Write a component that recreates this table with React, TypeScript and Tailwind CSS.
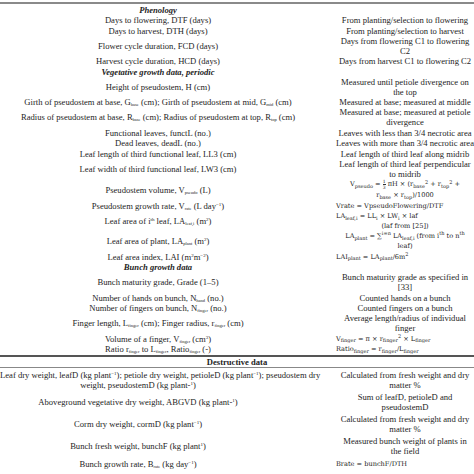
import type { ReactNode } from 'react'

type Row =
  | { kind: 'head'; text: string }
  | { kind: 'wide'; text: string }
  | { kind: 'row'; left: ReactNode; right: ReactNode; rightMath?: boolean; destructive?: boolean; last?: boolean }

const S = ({ children }: { children: ReactNode }) => (
  <sub className="text-[4.5px] align-baseline relative top-[1px]">{children}</sub>
)
const U = ({ children }: { children: ReactNode }) => (
  <sup className="text-[5px] align-baseline relative -top-[3px]">{children}</sup>
)
const MS = ({ children }: { children: ReactNode }) => (
  <sub className="text-[5px] align-baseline relative top-[1.5px]">{children}</sub>
)
const MU = ({ children }: { children: ReactNode }) => (
  <sup className="text-[5px] align-baseline relative -top-[3px]">{children}</sup>
)

const rows: Row[] = [
  { kind: 'head', text: 'Phenology' },
  { kind: 'row', left: 'Days to flowering, DTF (days)', right: 'From planting/selection to flowering' },
  { kind: 'row', left: 'Days to harvest, DTH (days)', right: 'From planting/selection to harvest' },
  { kind: 'row', left: 'Flower cycle duration, FCD (days)', right: <>Days from flowering C1 to flowering<br />C2</> },
  { kind: 'row', left: 'Harvest cycle duration, HCD (days)', right: 'Days from harvest C1 to flowering C2' },
  { kind: 'head', text: 'Vegetative growth data, periodic' },
  { kind: 'row', left: 'Height of pseudostem, H (cm)', right: <>Measured until petiole divergence on<br />the top</> },
  {
    kind: 'row',
    left: <>Girth of pseudostem at base, G<S>base</S> (cm); Girth of pseudostem at mid, G<S>mid</S> (cm)</>,
    right: 'Measured at base; measured at middle',
  },
  {
    kind: 'row',
    left: <>Radius of pseudostem at base, R<S>base</S> (cm); Radius of pseudostem at top, R<S>top</S> (cm)</>,
    right: <>Measured at base; measured at petiole<br />divergence</>,
  },
  { kind: 'row', left: 'Functional leaves, functL (no.)', right: 'Leaves with less than 3/4 necrotic area' },
  { kind: 'row', left: 'Dead leaves, deadL (no.)', right: 'Leaves with more than 3/4 necrotic area' },
  { kind: 'row', left: 'Leaf length of third functional leaf, LL3 (cm)', right: 'Leaf length of third leaf along midrib' },
  { kind: 'row', left: 'Leaf width of third functional leaf, LW3 (cm)', right: <>Leaf length of third leaf perpendicular<br />to midrib</> },
  {
    kind: 'row',
    left: <>Pseudostem volume, V<S>pseudo</S> (L)</>,
    rightMath: true,
    right: (
      <div className="text-center">
        <div>
          V<MS>pseudo</MS> = <span className="inline-flex flex-col align-middle text-[4.5px] leading-[5px]"><span>1</span><span className="border-t border-[#333]">3</span></span> πH × (r<MS>base</MS><MU>2</MU> + r<MS>top</MS><MU>2</MU> +
        </div>
        <div>r<MS>base</MS> × r<MS>top</MS>)/1000</div>
      </div>
    ),
  },
  {
    kind: 'row',
    left: <>Pseudostem growth rate, V<S>rate</S> (L day<U>−1</U>)</>,
    rightMath: true,
    right: <div className="text-left">Vrate = VpseudoFlowering/DTF</div>,
  },
  {
    kind: 'row',
    left: <>Leaf area of i<U>th</U> leaf, LA<S>leaf,i</S> (m<U>2</U>)</>,
    rightMath: true,
    right: (
      <>
        <div className="text-left">LA<MS>leaf,i</MS> = LL<MS>i</MS> × LW<MS>i</MS> × laf</div>
        <div className="text-center">(laf from [25])</div>
      </>
    ),
  },
  {
    kind: 'row',
    left: <>Leaf area of plant, LA<S>plant</S> (m<U>2</U>)</>,
    rightMath: true,
    right: (
      <div className="text-center">
        <div>LA<MS>plant</MS> = ∑<MU>i=n</MU> LA<MS>leaf,i</MS> (from i<MU>th</MU> to n<MU>th</MU></div>
        <div>leaf)</div>
      </div>
    ),
  },
  {
    kind: 'row',
    left: <>Leaf area index, LAI (m<U>2</U>m<U>−2</U>)</>,
    rightMath: true,
    right: <div className="text-left">LAI<MS>plant</MS> = LA<MS>plant</MS>/6m<MU>2</MU></div>,
  },
  { kind: 'head', text: 'Bunch growth data' },
  { kind: 'row', left: 'Bunch maturity grade, Grade (1–5)', right: <>Bunch maturity grade as specified in<br />[33]</> },
  { kind: 'row', left: <>Number of hands on bunch, N<S>hand</S> (no.)</>, right: 'Counted hands on a bunch' },
  { kind: 'row', left: <>Number of fingers on bunch, N<S>finger</S> (no.)</>, right: 'Counted fingers on a bunch' },
  {
    kind: 'row',
    left: <>Finger length, L<S>finger</S> (cm); Finger radius, r<S>finger</S> (cm)</>,
    right: <>Average length/radius of individual<br />finger</>,
  },
  {
    kind: 'row',
    left: <>Volume of a finger, V<S>finger</S> (cm<U>3</U>)</>,
    rightMath: true,
    right: <div className="text-left">V<MS>finger</MS> = π × r<MS>finger</MS><MU>2</MU> × L<MS>finger</MS></div>,
  },
  {
    kind: 'row',
    left: <>Ratio r<S>finger</S> to L<S>finger</S>, Ratio<S>finger</S> (-)</>,
    rightMath: true,
    right: <div className="text-left">Ratio<MS>finger</MS> = r<MS>finger</MS>/L<MS>finger</MS></div>,
  },
  { kind: 'wide', text: 'Destructive data' },
  {
    kind: 'row',
    destructive: true,
    left: (
      <>
        <span className="whitespace-nowrap">Leaf dry weight, leafD (kg plant<U>−1</U>); petiole dry weight, petioleD (kg plant<U>−1</U>); pseudostem dry</span>
        <br />
        weight, pseudostemD (kg plant-<U>1</U>)
      </>
    ),
    right: <>Calculated from fresh weight and dry<br />matter %</>,
  },
  {
    kind: 'row',
    destructive: true,
    left: <>Aboveground vegetative dry weight, ABGVD (kg plant-<U>1</U>)</>,
    right: <>Sum of leafD, petioleD and<br />pseudostemD</>,
  },
  {
    kind: 'row',
    destructive: true,
    left: <>Corm dry weight, cormD (kg plant<U>−1</U>)</>,
    right: <>Calculated from fresh weight and dry<br />matter %</>,
  },
  {
    kind: 'row',
    destructive: true,
    left: <>Bunch fresh weight, bunchF (kg plant<U>1</U>)</>,
    right: <>Measured bunch weight of plants in<br />the field</>,
  },
  {
    kind: 'row',
    destructive: true,
    left: <>Bunch growth rate, B<S>rate</S> (kg day<U>−1</U>)</>,
    rightMath: true,
    right: <div className="text-left">Brate = bunchF/DTH</div>,
  },
  {
    kind: 'row',
    destructive: true,
    last: true,
    left: '',
    right: <div className="text-center">Calculated as bunch dry weight</div>,
  },
]

export default function App() {
  return (
    <div
      className="w-[474px] h-[474px] overflow-hidden bg-white text-[#242424] text-[8.6px] leading-[10px]"
      style={{ fontFamily: '"Liberation Serif", "Times New Roman", serif' }}
    >
      <div className="h-[2px] mt-[2px] bg-[#8a8a8a]" />
      <div className="pt-[1px]" />
      {rows.map((row, i) => {
        if (row.kind === 'head') {
          return (
            <div key={i} className="w-[316px] text-center font-bold italic">
              {row.text}
            </div>
          )
        }
        if (row.kind === 'wide') {
          return (
            <div key={i} className="mb-[1px]">
              <div className="h-[1.5px] mt-[1px] bg-[#555]" />
              <div className="text-center font-bold">{row.text}</div>
              <div className="h-px bg-[#888]" />
            </div>
          )
        }
        return (
          <div
            key={i}
            className={`flex items-center ${row.destructive ? 'py-[1.1px]' : 'py-[0.2px]'} ${row.last ? 'mt-[3px]' : ''}`}
          >
            <div className={row.destructive ? 'w-[276px] text-center' : 'w-[316px] text-center'}>{row.left}</div>
            <div
              className={row.destructive ? 'ml-[60px] w-[138px] text-center' : 'ml-[20px] w-[138px] text-center'}
              style={row.rightMath ? { fontFamily: '"DejaVu Serif", serif', fontSize: '6.6px' } : undefined}
            >
              {row.right}
            </div>
          </div>
        )
      })}
    </div>
  )
}
